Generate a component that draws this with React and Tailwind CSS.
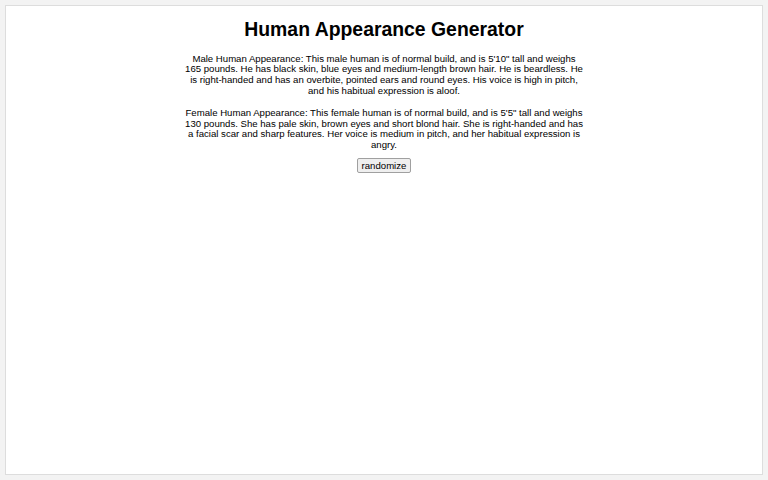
export default function App() {
  return (
    <div className="w-[768px] h-[480px] bg-[#f3f3f3] p-[5px]" style={{ fontFamily: '"Liberation Sans", Arial, sans-serif' }}>
      <div className="h-[470px] bg-white border border-[#dddddd] flex flex-col items-center">
        <h1 className="mt-[11px] text-[19.4px] font-bold leading-[24px] text-black">Human Appearance Generator</h1>
        <div className="w-[400px] mt-[12.5px] text-[9.6px] leading-[10.7px] text-black text-center">
          <p>
            Male Human Appearance: This male human is of normal build, and is 5'10" tall and weighs 165 pounds. He has black skin, blue eyes and medium-length brown hair. He is beardless. He is right-handed and has an overbite, pointed ears and round eyes. His voice is high in pitch, and his habitual expression is aloof.
          </p>
          <p className="mt-[11.5px]">
            Female Human Appearance: This female human is of normal build, and is 5'5" tall and weighs 130 pounds. She has pale skin, brown eyes and short blond hair. She is right-handed and has a facial scar and sharp features. Her voice is medium in pitch, and her habitual expression is angry.
          </p>
        </div>
        <button className="mt-[7.5px] px-[4px] h-[15px] text-[9.6px] leading-[12px] text-black bg-[#efefef] border border-[#a0a0a0] rounded-[2px]">
          randomize
        </button>
      </div>
    </div>
  );
}
